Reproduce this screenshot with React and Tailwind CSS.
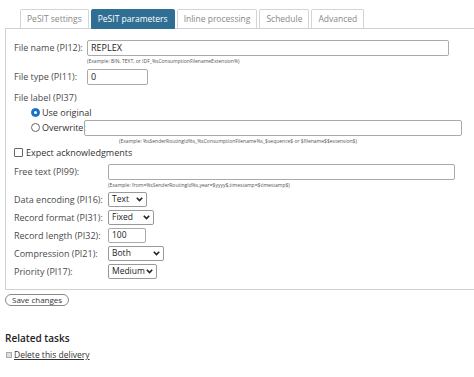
import React from "react";

const Chevron = () => (
  <svg width="7" height="5" viewBox="0 0 7 5" className="ml-auto">
    <path d="M0.8 0.8 L3.5 3.6 L6.2 0.8" fill="none" stroke="#222" strokeWidth="1.6" />
  </svg>
);

function Select({ value, width }) {
  return (
    <div className={`flex items-center h-[15px] border border-[#999] rounded-[2px] bg-white px-[3px] text-[8.5px] text-[#222] ${width}`}>
      <span>{value}</span>
      <Chevron />
    </div>
  );
}

function Field({ label, children, labelW = "w-[94px]", className = "" }) {
  return (
    <div className={`flex items-center ${className}`}>
      <span className={`${labelW} shrink-0 whitespace-nowrap`}>{label}</span>
      {children}
    </div>
  );
}

const Hint = ({ children, className = "" }) => (
  <div className={`text-[5px] leading-[8px] text-[#555] whitespace-nowrap ${className}`}>{children}</div>
);

export default function App() {
  const tabs = ["PeSIT settings", "PeSIT parameters", "Inline processing", "Schedule", "Advanced"];

  return (
    <div className="w-[474px] h-[377px] bg-white overflow-hidden text-[9px] text-[#4a4a4a]" style={{ fontFamily: '"Open Sans", "Noto Sans", sans-serif' }}>
      {/* tabs */}
      <div className="flex items-end gap-[2px] pl-[20px] pt-[9px] text-[8.5px]">
        {tabs.map((t, i) =>
          i === 1 ? (
            <div key={t} className="h-[20px] px-[6px] flex items-center bg-[#2f6f93] text-white border border-[#2f6f93] rounded-t-[2px] -mb-px">
              {t}
            </div>
          ) : (
            <div key={t} className="h-[19px] px-[6px] flex items-center border border-b-0 border-[#d4d4d4] text-[#888] rounded-t-[2px]">
              {t}
            </div>
          )
        )}
      </div>

      {/* panel */}
      <div className="ml-[5px] border-t border-l border-b border-[#d0d0d0] pl-[8px] pt-[11px] h-[262px]">
        <Field label="File name (PI12):" labelW="w-[73px]">
          <div className="w-[362px] h-[16px] border border-[#aaa] rounded-[2px] px-[3px] flex items-center text-[#222]">REPLEX</div>
        </Field>
        <Hint className="ml-[73px] mt-[1px]">(Example: BIN, TEXT, or IDF_%sConsumptionFilenameExtension%)</Hint>

        <Field label="File type (PI11):" labelW="w-[73px]" className="mt-[4px]">
          <div className="w-[61px] h-[16px] border border-[#aaa] rounded-[2px] px-[3px] flex items-center text-[#222]">0</div>
        </Field>

        <div className="mt-[6px] leading-[14px]">File label (PI37)</div>
        <div className="flex items-center ml-[17px] mt-[1px] text-[#333]">
          <span className="w-[9px] h-[9px] rounded-full bg-[#1a73c8] border border-[#1a73c8] mr-[2px] flex items-center justify-center">
            <span className="w-[3px] h-[3px] rounded-full bg-white" />
          </span>
          Use original
        </div>
        <div className="flex items-center ml-[17px] text-[#333]">
          <span className="w-[9px] h-[9px] rounded-full border border-[#666] mr-[2px]" />
          <span>Overwrite:</span>
          <div className="w-[378px] h-[16px] border border-[#aaa] rounded-[2px] -ml-[2px]" />
        </div>
        <Hint className="ml-[105px] mt-[1px]">(Example: %sSenderRoutingId%s_%sConsumptionFilename%s_$sequence$ or $filename$$extension$)</Hint>

        <div className="flex items-center mt-[1px] text-[#333]">
          <span className="w-[9px] h-[9px] border border-[#666] rounded-[1px] mr-[3px]" />
          Expect acknowledgments
        </div>

        <Field label="Free text (PI99):" className="mt-[5px]">
          <div className="w-[347px] h-[16px] border border-[#aaa] rounded-[2px]" />
        </Field>
        <Hint className="ml-[94px] mt-[1px]">(Example: from=%sSenderRoutingId%s,year=$yyyy$,timestamp=$timestamp$)</Hint>

        <div className="flex flex-col gap-[3px] mt-[3px]">
          <Field label="Data encoding (PI16):">
            <Select value="Text" width="w-[39px]" />
          </Field>
          <Field label="Record format (PI31):">
            <Select value="Fixed" width="w-[46px]" />
          </Field>
          <Field label="Record length (PI32):">
            <div className="w-[38px] h-[15px] border border-[#aaa] rounded-[2px] px-[3px] flex items-center text-[#222] text-[8.5px]">100</div>
          </Field>
          <Field label="Compression (PI21):">
            <Select value="Both" width="w-[56px]" />
          </Field>
          <Field label="Priority (PI17):">
            <Select value="Medium" width="w-[49px]" />
          </Field>
        </div>
      </div>

      <div className="ml-[5px] mt-[4px]">
        <button className="h-[12px] px-[6px] border border-[#888] rounded-full text-[8px] leading-none text-[#333] flex items-center">
          Save changes
        </button>
      </div>

      <div className="ml-[5px] mt-[25px] text-[10px] font-semibold text-[#222]">Related tasks</div>
      <div className="ml-[6px] mt-[3px] flex items-center text-[8.5px] text-[#333]">
        <span className="w-[6px] h-[6px] border border-[#aaa] bg-[#ddd] mr-[2px]" />
        <span className="underline">Delete this delivery</span>
      </div>
    </div>
  );
}
